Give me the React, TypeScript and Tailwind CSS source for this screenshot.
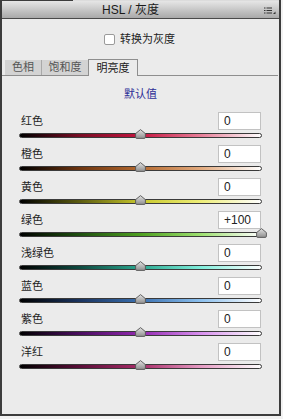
const font = "font-['Liberation_Sans','Noto_Sans_CJK_SC',sans-serif]";

const rows = [
  { label: '红色', value: 0, track: 'bg-[linear-gradient(to_right,#000,#7a0d25_25%,#c4153f_50%,#e87e98_75%,#fff)]' },
  { label: '橙色', value: 0, track: 'bg-[linear-gradient(to_right,#000,#6e3510_25%,#b4692f_50%,#e2aa7e_75%,#fff)]' },
  { label: '黄色', value: 0, track: 'bg-[linear-gradient(to_right,#000,#5c5c10_25%,#c8c82c_50%,#eeee78_75%,#fff)]' },
  { label: '绿色', value: 100, track: 'bg-[linear-gradient(to_right,#000,#1f5010_25%,#4ea020_50%,#9ee070_75%,#fff)]' },
  { label: '浅绿色', value: 0, track: 'bg-[linear-gradient(to_right,#000,#0e4a40_25%,#2aa890_50%,#80eedc_75%,#fff)]' },
  { label: '蓝色', value: 0, track: 'bg-[linear-gradient(to_right,#000,#1a3460_25%,#3a70b0_50%,#8cc0ee_75%,#fff)]' },
  { label: '紫色', value: 0, track: 'bg-[linear-gradient(to_right,#000,#4a0e60_25%,#9228b0_50%,#d890ee_75%,#fff)]' },
  { label: '洋红', value: 0, track: 'bg-[linear-gradient(to_right,#000,#5a0e38_25%,#a82c68_50%,#e69cc4_75%,#fff)]' },
];

function Thumb({ value }: { value: number }) {
  // track is 243px wide, 0 sits in the middle
  const left = 121.5 + (value / 100) * 120.5 - 5.5;
  return (
    <svg className="absolute top-[-4px]" style={{ left }} width="11" height="10" viewBox="0 0 11 10">
      <defs>
        <linearGradient id="thumbfill" x1="0" y1="0" x2="0" y2="1">
          <stop offset="0" stopColor="#e2e2e2" />
          <stop offset="1" stopColor="#8e8e8e" />
        </linearGradient>
      </defs>
      <path d="M5.5 0.6 L10.4 4.6 L10.4 8.2 Q10.4 9.4 9.2 9.4 L1.8 9.4 Q0.6 9.4 0.6 8.2 L0.6 4.6 Z" fill="url(#thumbfill)" stroke="#555" strokeWidth="0.9" />
    </svg>
  );
}

function SliderRow({ label, value, track }: { label: string; value: number; track: string }) {
  return (
    <div className="flex flex-col gap-[3px] mb-[7px]">
      <div className="flex items-center justify-between pl-[2px] pr-[1px]">
        <span className="text-[11px] leading-none text-[#1e1e1e]">{label}</span>
        <div className="w-[43px] h-[18px] bg-white border border-[#c2c2c2] flex items-center pl-[5px] text-[12px] text-[#222]">
          {value > 0 ? `+${value}` : value}
        </div>
      </div>
      <div className="relative h-[5px]">
        <div className={`h-[5px] rounded-full border border-[#3a3a3a] ${track}`} />
        <Thumb value={value} />
      </div>
    </div>
  );
}

export default function App() {
  return (
    <div className={`w-[283px] h-[419px] bg-[#f2f2f2] ${font}`}>
      <div className="w-[281px] h-[416px] flex flex-col border-l-2 border-r-2 border-b-2 border-[#3c3c3c] bg-[#ebebeb]">
        {/* header */}
        <div className="flex h-px">
          <div className="w-[71px] bg-[#3c3c3c]" />
          <div className="flex-1 bg-[#dcdcdc]" />
        </div>
        <div className="relative h-[18px] flex items-center justify-center pr-[20px] border-b border-[#4a4a4a] bg-[linear-gradient(to_bottom,#e6e6e6,#a9a9a9)]">
          <span className="text-[12px] text-[#1a1a1a] leading-none">HSL / 灰度</span>
          <svg className="absolute right-[3px] top-[6px]" width="12" height="8" viewBox="0 0 12 8">
            <rect x="0" y="0.5" width="1.5" height="1" fill="#333" />
            <rect x="2.5" y="0.5" width="5.5" height="1" fill="#333" />
            <rect x="0" y="3" width="1.5" height="1" fill="#333" />
            <rect x="2.5" y="3" width="5.5" height="1" fill="#333" />
            <rect x="0" y="5.5" width="1.5" height="1" fill="#333" />
            <rect x="2.5" y="5.5" width="5.5" height="1" fill="#333" />
            <path d="M9 7 L11.5 7 L11.5 4.5 Z" fill="#333" />
          </svg>
        </div>

        {/* grayscale checkbox */}
        <div className="flex items-center justify-center gap-[5px] mt-[15px] pr-[2px]">
          <div className="w-[11px] h-[11px] bg-white border border-[#9a9a9a] rounded-[2px]" />
          <span className="text-[11px] leading-none text-[#222]">转换为灰度</span>
        </div>

        {/* tabs */}
        <div className="flex items-end mt-[14px] h-[17px] border-b border-[#8e8e8e] mr-[1px] pl-[3px]">
          <div className="w-[37px] h-[15px] flex items-center justify-center bg-[#d3d3d3] border-r border-[#a9a9a9] text-[11px] text-[#555]">色相</div>
          <div className="w-[46px] h-[15px] flex items-center justify-center bg-[#d3d3d3] text-[11px] text-[#555]">饱和度</div>
          <div className="w-[50px] h-[17px] mb-[-1px] flex items-center justify-center bg-[#ebebeb] border border-b-0 border-[#8e8e8e] text-[11px] text-[#1a1a1a]">明亮度</div>
        </div>

        {/* default link */}
        <div className="flex justify-center mt-[13px]">
          <span className="text-[11px] leading-none text-[#2e2e96]">默认值</span>
        </div>

        {/* sliders */}
        <div className="flex flex-col mt-[12px] px-[17px]">
          {rows.map((r) => (
            <SliderRow key={r.label} {...r} />
          ))}
        </div>
      </div>
    </div>
  );
}
